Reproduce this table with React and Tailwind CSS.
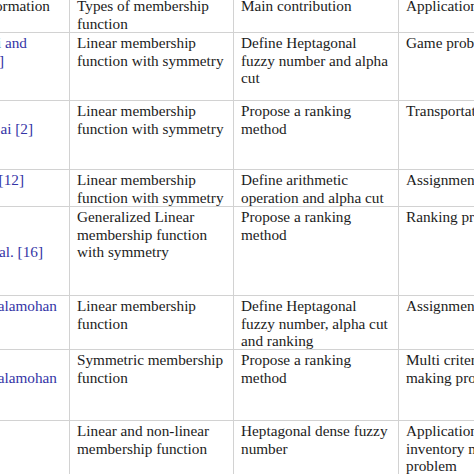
import React from 'react';

const rows = [
  {
    h: 'h-[68px]',
    author: [['Rathi and', 'pr-[42px]'], ['Balamohan [1]', 'pr-[65px]']],
    type: ['Linear membership', 'function with symmetry'],
    contrib: ['Define Heptagonal', 'fuzzy number and alpha', 'cut'],
    app: ['Game problem'],
  },
  {
    h: 'h-[69px]',
    author: [['', ''], ['Rajarajeswari and Sudha Sai [2]', 'pr-[36px]']],
    type: ['Linear membership', 'function with symmetry'],
    contrib: ['Propose a ranking', 'method'],
    app: ['Transportation problem'],
  },
  {
    h: 'h-[37px]',
    author: [['Namarta et al. [12]', 'pr-[45px]']],
    type: ['Linear membership', 'function with symmetry'],
    contrib: ['Define arithmetic', 'operation and alpha cut'],
    app: ['Assignment problem'],
  },
  {
    h: 'h-[89px]',
    author: [['', ''], ['', ''], ['Sudha et al. [16]', 'pr-[26px]']],
    type: ['Generalized Linear', 'membership function', 'with symmetry'],
    contrib: ['Propose a ranking', 'method'],
    app: ['Ranking problem'],
  },
  {
    h: 'h-[54px]',
    author: [['Rathi and Balamohan', 'pr-[12px]']],
    type: ['Linear membership', 'function'],
    contrib: ['Define Heptagonal', 'fuzzy number, alpha cut', 'and ranking'],
    app: ['Assignment problem'],
  },
  {
    h: 'h-[71px]',
    author: [['', ''], ['Rathi and Balamohan', 'pr-[12px]']],
    type: ['Symmetric membership', 'function'],
    contrib: ['Propose a ranking', 'method'],
    app: ['Multi criteria decision', 'making problem'],
  },
  {
    h: 'h-[80px]',
    author: [],
    type: ['Linear and non-linear', 'membership function'],
    contrib: ['Heptagonal dense fuzzy', 'number'],
    app: ['Application of', 'inventory model', 'problem'],
  },
];

function Lines({ lines }) {
  return lines.map((l, i) => (
    <div key={i} className="whitespace-nowrap">{l || '\u00a0'}</div>
  ));
}

function AuthorCell({ lines, h, head }) {
  return (
    <div className={`${h} border-r border-b border-[#d2d2d2] pt-[1px] ${head ? 'text-[#1c1c1c]' : 'text-[#3434a6]'}`}>
      {lines.map(([t, pr], i) => (
        <div key={i} className={`flex justify-end whitespace-nowrap ${pr}`}>
          <span>{t || '\u00a0'}</span>
        </div>
      ))}
    </div>
  );
}

function Cell({ lines, h, last }) {
  return (
    <div className={`${h} ${last ? '' : 'border-r'} border-b border-[#d2d2d2] pl-[7px] pt-[1px] overflow-hidden`}>
      <Lines lines={lines} />
    </div>
  );
}

export default function App() {
  return (
    <div className="w-[474px] h-[474px] overflow-hidden bg-white">
      <div
        className="w-[600px] mt-[-4px] grid grid-cols-[70px_164px_165px_1fr] text-[15.25px] leading-[17.5px] text-[#1c1c1c]"
        style={{ fontFamily: '"Liberation Serif", "Times New Roman", serif' }}
      >
        <AuthorCell head h="h-[37px]" lines={[['Author information', 'pr-[19px]'], ['', '']]} />
        <Cell h="h-[37px]" lines={['Types of membership', 'function']} />
        <Cell h="h-[37px]" lines={['Main contribution']} />
        <Cell h="h-[37px]" last lines={['Application']} />
        {rows.map((r, i) => (
          <React.Fragment key={i}>
            <AuthorCell h={r.h} lines={r.author} />
            <Cell h={r.h} lines={r.type} />
            <Cell h={r.h} lines={r.contrib} />
            <Cell h={r.h} last lines={r.app} />
          </React.Fragment>
        ))}
      </div>
    </div>
  );
}
